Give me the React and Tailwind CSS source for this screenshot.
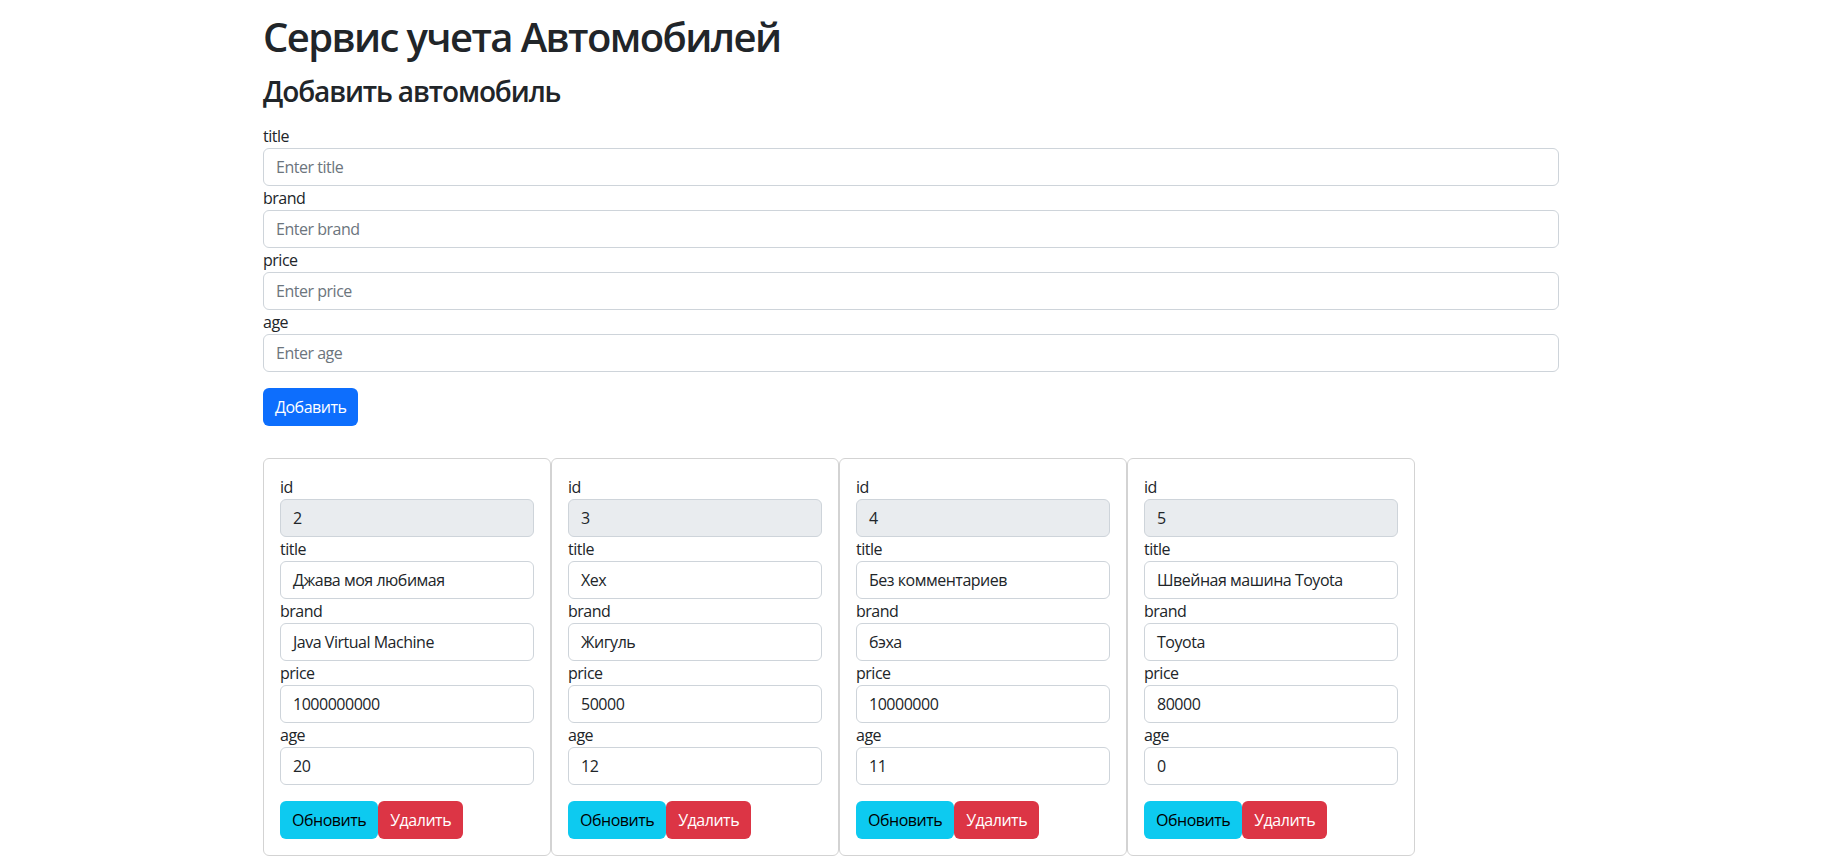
import React from "react";

const cars = [
  { id: "2", title: "Джава моя любимая", brand: "Java Virtual Machine", price: "1000000000", age: "20" },
  { id: "3", title: "Хех", brand: "Жигуль", price: "50000", age: "12" },
  { id: "4", title: "Без комментариев", brand: "бэха", price: "10000000", age: "11" },
  { id: "5", title: "Швейная машина Toyota", brand: "Toyota", price: "80000", age: "0" },
];

const inputCls =
  "block w-full h-[38px] px-3 border border-[#ced4da] rounded-[6px] bg-white text-base tracking-[-0.03em] text-[#212529] outline-none placeholder:text-[#6c757d]";

function Field({ label, placeholder }) {
  return (
    <div>
      <label className="block text-base leading-6 tracking-[-0.03em]">{label}</label>
      <input className={inputCls} placeholder={placeholder} readOnly />
    </div>
  );
}

function Card({ car }) {
  const rows = [
    ["id", car.id, true],
    ["title", car.title],
    ["brand", car.brand],
    ["price", car.price],
    ["age", car.age],
  ];
  return (
    <div className="w-[288px] shrink-0 border border-[#d3d3d3] rounded-[6px] p-4">
      {rows.map(([label, value, disabled]) => (
        <div key={label}>
          <div className="text-base leading-6">{label}</div>
          <div
            className={
              "flex items-center h-[38px] px-3 border border-[#ced4da] rounded-[6px] text-base whitespace-nowrap " +
              (disabled ? "bg-[#e9ecef]" : "bg-white")
            }
          >
            {value}
          </div>
        </div>
      ))}
      <div className="flex mt-4">
        <button className="h-[38px] px-3 bg-[#0dcaf0] text-black rounded-[6px] text-base">Обновить</button>
        <button className="h-[38px] px-3 bg-[#dc3545] text-white rounded-[6px] text-base">Удалить</button>
      </div>
    </div>
  );
}

export default function App() {
  return (
    <div
      className="min-h-screen bg-white text-[#212529] tracking-[-0.03em]"
      style={{ fontFamily: '"Open Sans", "Noto Sans", sans-serif' }}
    >
      <div className="ml-[263px] w-[1296px] pt-[13px] pb-2 flex flex-col items-start">
        <h1 className="text-[40px] leading-[48px] font-semibold tracking-[-0.04em] mb-[13px]">
          Сервис учета Автомобилей
        </h1>
        <h3 className="text-[28px] leading-[34px] font-semibold tracking-[-0.04em] mb-4">Добавить автомобиль</h3>
        <div className="w-full">
          <Field label="title" placeholder="Enter title" />
          <Field label="brand" placeholder="Enter brand" />
          <Field label="price" placeholder="Enter price" />
          <Field label="age" placeholder="Enter age" />
        </div>
        <button className="mt-4 h-[38px] px-3 bg-[#0d6efd] text-white rounded-[6px] text-base">Добавить</button>
        <div className="flex mt-8">
          {cars.map((c) => (
            <Card key={c.id} car={c} />
          ))}
        </div>
      </div>
    </div>
  );
}
